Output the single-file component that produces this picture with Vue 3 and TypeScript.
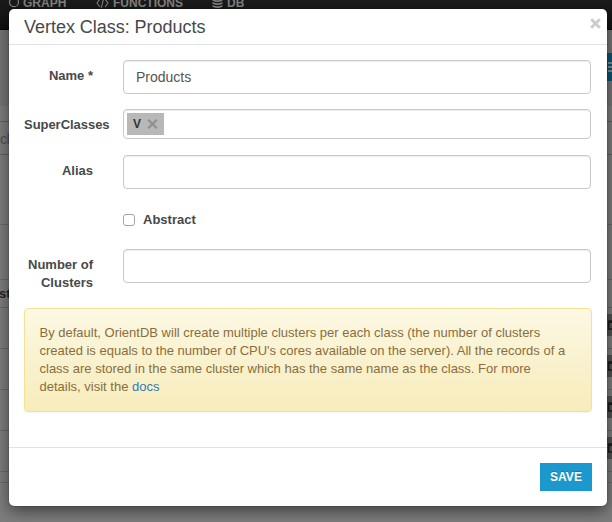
<script setup lang="ts">
import { ref } from 'vue'

const name = ref('Products')
const alias = ref('')
const clusters = ref('')
const isAbstract = ref(false)
const superClasses = ref<string[]>(['V'])
const badgeRows = [1, 2, 3, 4]

function removeSuperClass(index: number) {
  superClasses.value.splice(index, 1)
}
</script>

<template>
  <div class="screen">
    <div class="page">
      <nav class="navbar">
        <span class="nav-item graph">
          <svg width="11" height="12" viewBox="0 0 11 12"><circle cx="6" cy="5.2" r="4.5" fill="none" stroke="currentColor" stroke-width="1.2" /></svg>
          <span>GRAPH</span>
        </span>
        <span class="nav-item functions">
          <svg width="13" height="12" viewBox="0 0 13 12"><path d="M4 2 1 6l3 4M9 2l3 4-3 4M7.6 1.2 5.4 10.8" fill="none" stroke="currentColor" stroke-width="1.1" /></svg>
          <span>FUNCTIONS</span>
        </span>
        <span class="nav-item db">
          <svg width="11" height="12" viewBox="0 0 11 12"><path d="M.5 2q5 2.6 10 0v1.7q-5 2.8-10 0zM.5 5q5 2.6 10 0v1.7q-5 2.8-10 0zM.5 8q5 2.6 10 0v1.7q-5 2.8-10 0z" fill="currentColor" /></svg>
          <span>DB</span>
        </span>
      </nav>
      <div class="toolbar">
        <span class="new-button"><svg width="4" height="10" viewBox="0 0 4 10"><path d="M0 1h4M0 5h4M0 9h4" stroke="#7f8f96" stroke-width="2" /></svg></span>
      </div>
      <div class="spacer"></div>
      <div class="search"><span>ch</span></div>
      <div class="row tall"></div>
      <div class="row mid"></div>
      <div class="row head"><span>st</span></div>
      <div v-for="row in badgeRows" :key="row" class="row item">
        <span class="badge"><svg width="4" height="10" viewBox="0 0 4 10"><path d="M4 1H.7v8H4M1 2.2h3" fill="none" stroke="#1c1c1c" stroke-width="1.4" /></svg></span>
      </div>
      <div class="row last"></div>
    </div>

    <div class="modal">
      <header class="modal-header">
        <h4>Vertex Class: Products</h4>
        <button class="close" type="button" aria-label="Close">
          <svg width="11" height="11" viewBox="0 0 11 11"><path d="M1.2 1.3 9.8 9.7M9.8 1.3 1.2 9.7" stroke="#cbcbcb" stroke-width="2.8" /></svg>
        </button>
      </header>
      <div class="modal-body">
        <div class="field">
          <label class="caption">Name *</label>
          <input v-model="name" class="control" type="text" />
        </div>
        <div class="field super">
          <label class="caption wide">SuperClasses</label>
          <div class="tags">
            <span v-for="(item, i) in superClasses" :key="item" class="tag">
              {{ item }}
              <svg width="11" height="10" viewBox="0 0 11 10" @click="removeSuperClass(i)"><path d="M1.2.8 9.8 9.2M9.8.8 1.2 9.2" stroke="#909090" stroke-width="2.3" /></svg>
            </span>
          </div>
        </div>
        <div class="field alias">
          <label class="caption">Alias</label>
          <input v-model="alias" class="control" type="text" />
        </div>
        <label class="check"><input v-model="isAbstract" type="checkbox" /><span>Abstract</span></label>
        <div class="field">
          <label class="caption">Number of Clusters</label>
          <input v-model="clusters" class="control" type="text" />
        </div>
        <div class="alert">
          By default, OrientDB will create multiple clusters per each class (the number of clusters<br />
          created is equals to the number of CPU's cores available on the server). All the records of a<br />
          class are stored in the same cluster which has the same name as the class. For more<br />
          details, visit the <a>docs</a>
        </div>
      </div>
      <footer class="modal-footer"><button class="save" type="button">SAVE</button></footer>
    </div>
  </div>
</template>

<style>
body {
  margin: 0;
  overflow: hidden;
}
</style>

<style scoped>
* {
  box-sizing: border-box;
}
.screen {
  position: relative;
  width: 612px;
  height: 522px;
  overflow: hidden;
  font: 13px/18px "Liberation Sans", Arial, sans-serif;
  color: #474949;
}
.page {
  height: 522px;
  background: #7d7d7d;
}
.navbar {
  display: flex;
  height: 30px;
  background: linear-gradient(#1b1b1b, #111);
  border-bottom: 1px solid #080808;
  padding-left: 8px;
  color: #828282;
}
.nav-item {
  display: flex;
  gap: 4px;
  height: 12px;
  margin-top: -3px;
  font-size: 12px;
  line-height: 12px;
  font-weight: bold;
}
.graph {
  width: 88px;
}
.functions {
  width: 116px;
}
.toolbar {
  display: flex;
  justify-content: flex-end;
  height: 76px;
  padding-top: 23px;
  background: #757575;
}
.new-button {
  display: flex;
  align-items: center;
  justify-content: flex-end;
  width: 5px;
  height: 28px;
  background: #0c5472;
}
.spacer {
  height: 15px;
}
.search {
  height: 34px;
  border: solid #606060;
  border-width: 1px 0;
  line-height: 34px;
  color: #505050;
  font-size: 14px;
}
.search span {
  margin-left: 0;
  letter-spacing: -0.5px;
}
.row {
  border-bottom: 1px solid #686868;
}
.tall {
  height: 70px;
}
.mid {
  height: 55px;
}
.head {
  height: 28px;
  font-weight: bold;
  color: #222;
  line-height: 27px;
}
.head span {
  margin-left: -1px;
}
.item {
  display: flex;
  justify-content: flex-end;
  height: 41px;
  padding-top: 6px;
}
.badge {
  display: flex;
  align-items: center;
  justify-content: flex-end;
  width: 6px;
  height: 22px;
  background: #515151;
}
.last {
  height: 11px;
}
.modal {
  position: absolute;
  left: 9px;
  top: 9px;
  display: flex;
  flex-direction: column;
  width: 598px;
  height: 497px;
  background: #fff;
  border-radius: 5px;
  box-shadow: 0 0 1px rgba(0, 0, 0, 0.7), 0 5px 15px rgba(0, 0, 0, 0.5);
}
.modal-header {
  display: flex;
  justify-content: space-between;
  height: 36px;
  padding: 0 6px 0 15px;
  border-bottom: 1px solid #e2e2e2;
}
h4 {
  margin: 0;
  font-size: 18px;
  line-height: 36px;
  font-weight: normal;
  letter-spacing: -0.03px;
}
.close {
  display: block;
  height: 11px;
  margin: 9px 0 0;
  padding: 0;
  border: 0;
  background: none;
}
.close svg {
  display: block;
}
.modal-body {
  display: flex;
  flex-direction: column;
  height: 402px;
  padding: 15px 15px 0;
}
.field {
  display: flex;
  flex: none;
  height: 34px;
}
.caption {
  width: 69px;
  margin-right: 30px;
  padding-top: 7px;
  flex: none;
  text-align: right;
  font-weight: bold;
}
.wide {
  width: 85.5px;
  margin-right: 13.5px;
  white-space: nowrap;
  letter-spacing: -0.04px;
}
.control,
.tags {
  width: 468px;
  height: 34px;
  padding: 6px 12px;
  border: 1px solid #c9c9c9;
  border-radius: 4px;
  background: #fff;
  box-shadow: inset 0 1px 1px rgba(0, 0, 0, 0.075);
  color: #555;
  font: 14px/20px "Liberation Sans", Arial, sans-serif;
}
.super {
  height: 30px;
  margin-top: 15px;
}
.tags {
  height: 30px;
  padding: 3px;
}
.tag {
  display: inline-flex;
  align-items: center;
  gap: 6px;
  width: 37px;
  height: 22px;
  padding-left: 6px;
  background: #b8b8b8;
  color: #333;
  font-size: 12px;
  font-weight: bold;
  vertical-align: top;
}
.alias {
  margin-top: 16px;
}
.check {
  display: flex;
  align-items: center;
  height: 18px;
  margin: 22px 0 20px 99px;
  gap: 8px;
  font-weight: bold;
}
.check input {
  appearance: none;
  width: 12px;
  height: 12px;
  margin: 0;
  border: 1px solid #a5a5a5;
  border-radius: 3px;
}
.check input:checked {
  background: #1b98ce;
}
.alert {
  height: 104px;
  margin-top: 25px;
  padding: 15px 0 0 14.5px;
  border: 1px solid #f3e294;
  border-radius: 4px;
  background: linear-gradient(#fcf8e3, #f7ecbb);
  box-shadow: 0 1px 2px rgba(0, 0, 0, 0.05);
  color: #8a6d3b;
  white-space: nowrap;
}
a {
  color: #337ab7;
}
.modal-footer {
  display: flex;
  justify-content: flex-end;
  height: 59px;
  padding: 15px 15px 0 0;
  border-top: 1px solid #e2e2e2;
}
.save {
  width: 52px;
  height: 28px;
  padding: 0;
  border: 0;
  background: #1b98ce;
  color: #fff;
  font: bold 12px/28px "Liberation Sans", Arial, sans-serif;
  text-shadow: 0 -1px 0 rgba(0, 0, 0, 0.2);
}
</style>
